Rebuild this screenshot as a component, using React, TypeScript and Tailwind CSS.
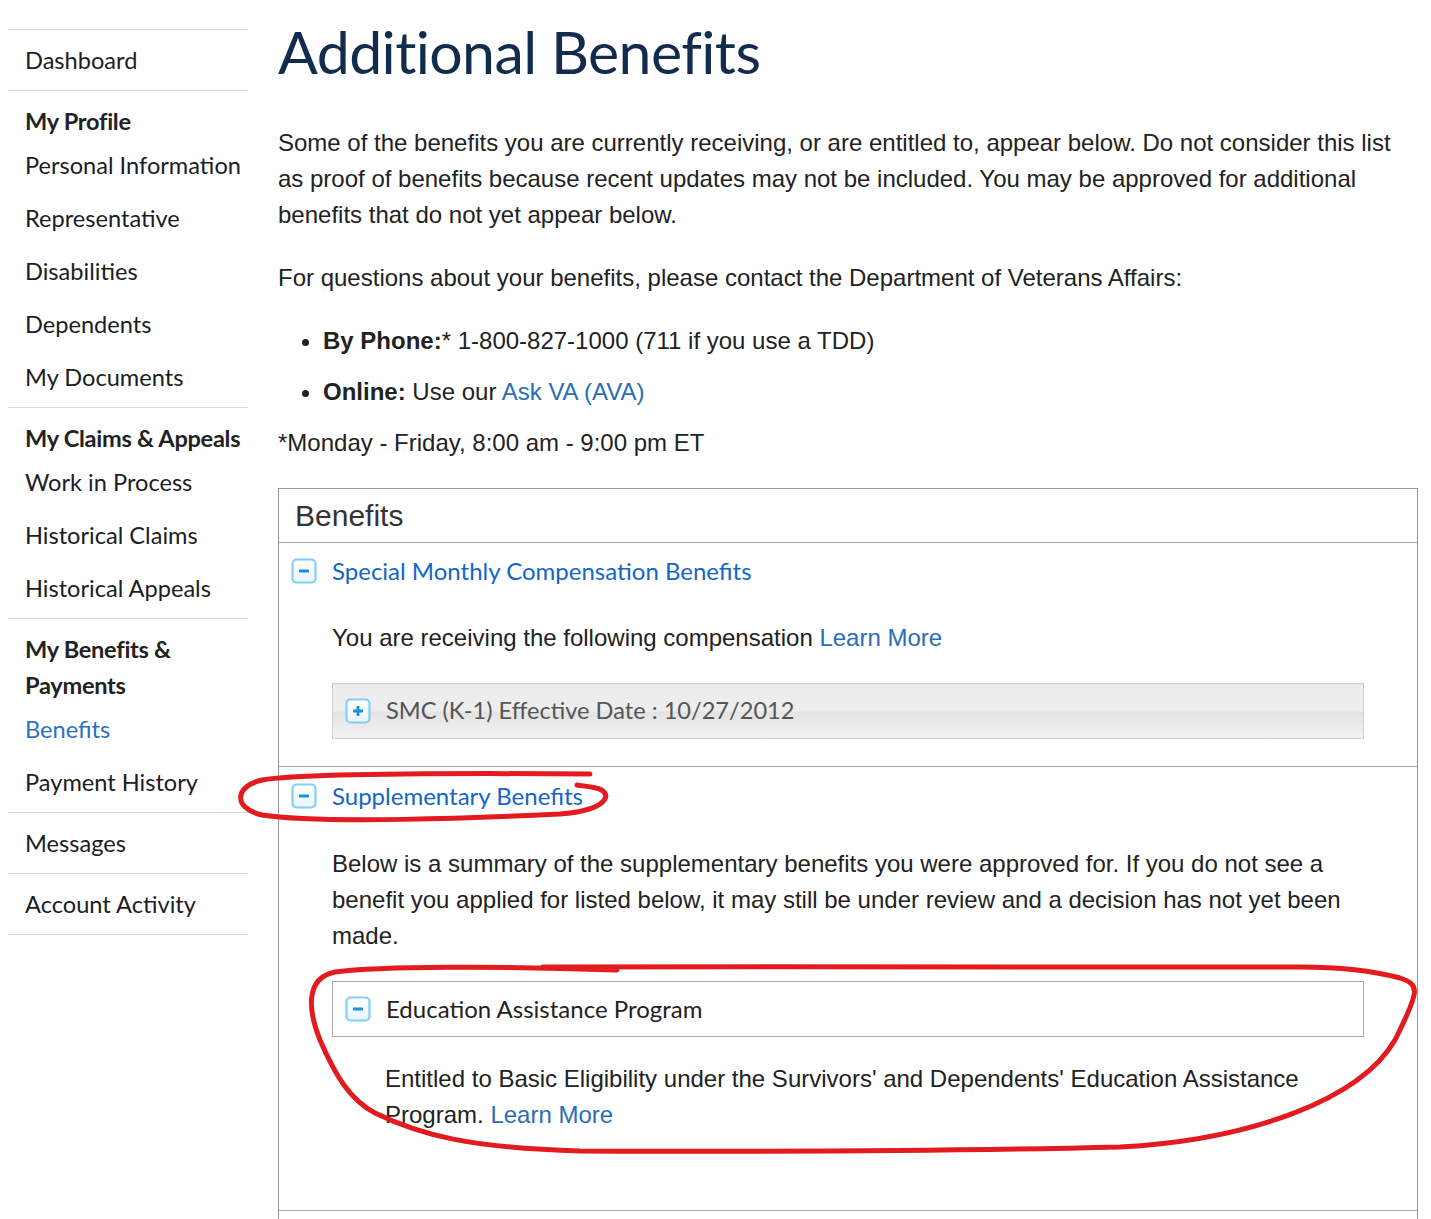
import type { ReactNode } from 'react';

const lato = "font-['Lato','Liberation_Sans',sans-serif]";
const arial = "font-['Liberation_Sans',Arial,sans-serif]";

type NavGroup = {
  heading?: string;
  items: { label: string; active?: boolean }[];
};

const navGroups: NavGroup[] = [
  { items: [{ label: 'Dashboard' }] },
  {
    heading: 'My Profile',
    items: [
      { label: 'Personal Information' },
      { label: 'Representative' },
      { label: 'Disabilities' },
      { label: 'Dependents' },
      { label: 'My Documents' },
    ],
  },
  {
    heading: 'My Claims & Appeals',
    items: [{ label: 'Work in Process' }, { label: 'Historical Claims' }, { label: 'Historical Appeals' }],
  },
  {
    heading: 'My Benefits & Payments',
    items: [{ label: 'Benefits', active: true }, { label: 'Payment History' }],
  },
  { items: [{ label: 'Messages' }] },
  { items: [{ label: 'Account Activity' }] },
];

function ToggleIcon({ open }: { open: boolean }) {
  return (
    <svg width="26" height="26" viewBox="0 0 26 26" className="shrink-0">
      <defs>
        <linearGradient id="tgl" x1="0" y1="0" x2="0" y2="1">
          <stop offset="0" stopColor="#ffffff" />
          <stop offset="1" stopColor="#e6f5fd" />
        </linearGradient>
      </defs>
      <rect x="1.5" y="1.5" width="23" height="23" rx="4" fill="url(#tgl)" stroke="#86cdf1" strokeWidth="2.2" />
      <rect x="8" y="11.6" width="10" height="2.8" rx="0.6" fill="#1f8fdc" />
      {!open && <rect x="11.6" y="8" width="2.8" height="10" rx="0.6" fill="#1f8fdc" />}
    </svg>
  );
}

function Sidebar() {
  return (
    <nav className={`${lato} mt-[29px] w-[240px] shrink-0 border-t border-[#d6d6d6] text-[23.6px] text-[#1c1c24]`}>
      {navGroups.map((group, i) =>
        group.heading ? (
          <div key={i} className="border-b border-[#d6d6d6] pt-[12px] pb-[3px] pl-[17px]">
            <div className="font-bold leading-[36px] tracking-[-0.3px] text-[#222]">{group.heading}</div>
            {group.items.map((item) => (
              <div
                key={item.label}
                className={`flex h-[53px] items-center ${item.active ? 'text-[#2a72c6]' : ''}`}
              >
                {item.label}
              </div>
            ))}
          </div>
        ) : (
          <div key={i} className="flex h-[61px] items-center border-b border-[#d6d6d6] pt-[2px] pl-[17px]">
            {group.items[0].label}
          </div>
        ),
      )}
    </nav>
  );
}

function Link({ children }: { children: ReactNode }) {
  return <a className="cursor-pointer text-[#2b6db5]">{children}</a>;
}

function SectionHeader({ title }: { title: string }) {
  return (
    <div className="flex items-center gap-[15px] pl-[12px]">
      <ToggleIcon open />
      <span className={`${lato} text-[24px] leading-[26px] text-[#1466c6]`}>{title}</span>
    </div>
  );
}

function BenefitsPanel() {
  return (
    <div className="border border-[#999] pb-[40px]">
      <div className={`${arial} flex h-[54px] items-center border-b border-[#aaa] pl-[16px] text-[30px] text-[#333]`}>
        Benefits
      </div>

      {/* Special Monthly Compensation */}
      <section className="border-b border-[#aaa] pt-[15px] pb-[27px]">
        <SectionHeader title="Special Monthly Compensation Benefits" />
        <div className="px-[53px]">
          <p className="mt-[36px] leading-[36px]">
            You are receiving the following compensation <Link>Learn More</Link>
          </p>
          <div className="mt-[27px] flex h-[56px] items-center gap-[15px] border border-[#cfcfcf] bg-[linear-gradient(#ededed_0%,#ededed_50%,#e3e3e3_52%,#f3f3f3_100%)] pl-[12px]">
            <ToggleIcon open={false} />
            <span className={`${lato} text-[23.6px] text-[#555]`}>SMC (K-1) Effective Date : 10/27/2012</span>
          </div>
        </div>
      </section>

      {/* Supplementary */}
      <section className="border-b border-[#aaa] pt-[16px] pb-[77px]">
        <SectionHeader title="Supplementary Benefits" />
        <div className="px-[53px]">
          <p className="mt-[37px] leading-[36px]">
            Below is a summary of the supplementary benefits you were approved for. If you do not see a benefit you
            applied for listed below, it may still be under review and a decision has not yet been made.
          </p>
          <div className="mt-[27px] flex h-[56px] items-center gap-[15px] border border-[#aaa] bg-white pl-[12px]">
            <ToggleIcon open />
            <span className={`${lato} text-[24px] text-[#222]`}>Education Assistance Program</span>
          </div>
          <p className="mt-[24px] pl-[53px] pr-[53px] leading-[36px]">
            Entitled to Basic Eligibility under the Survivors' and Dependents' Education Assistance Program.{' '}
            <Link>Learn More</Link>
          </p>
        </div>
      </section>
    </div>
  );
}

function Markup() {
  // hand-drawn highlight strokes on top of the page
  return (
    <svg
      className="pointer-events-none absolute left-0 top-0"
      width="1431"
      height="1219"
      viewBox="0 0 1431 1219"
      fill="none"
      stroke="#e31b1f"
      strokeWidth="5"
      strokeLinecap="round"
      strokeLinejoin="round"
    >
      <path d="M590 774 C450 773 300 774 262 780 C235 786 232 808 262 815 C320 824 480 818 560 814 C610 810 614 792 596 788 C588 786 582 786 577 785" />
      <path d="M617 970 C500 966 380 966 335 972 C305 978 308 1010 320 1040 C335 1075 350 1100 375 1113 C420 1135 470 1148 580 1151 C800 1152 1000 1150 1120 1147 C1250 1140 1360 1100 1395 1040 C1420 990 1420 985 1400 978 C1370 970 1340 967 1300 967 C1100 966 800 967 543 967" />
    </svg>
  );
}

export default function App() {
  return (
    <div className="relative h-[1219px] overflow-hidden bg-white">
      <div className="flex items-start pl-[8px]">
        <Sidebar />
        <main className={`${arial} ml-[30px] w-[1140px] pt-[16px] text-[24px] text-[#222]`}>
          <h1 className={`${lato} mb-[37px] text-[59px] leading-[72px] tracking-[-0.6px] text-[#132b4c]`}>
            Additional Benefits
          </h1>
          <p className="leading-[36px]">
            Some of the benefits you are currently receiving, or are entitled to, appear below. Do not consider this
            list as proof of benefits because recent updates may not be included. You may be approved for additional
            benefits that do not yet appear below.
          </p>
          <p className="mt-[27px] leading-[36px]">
            For questions about your benefits, please contact the Department of Veterans Affairs:
          </p>
          <ul className="mt-[27px] list-disc pl-[45px] leading-[36px]">
            <li className="mb-[15px]">
              <b>By Phone:</b>* 1-800-827-1000 (711 if you use a TDD)
            </li>
            <li className="mb-[15px]">
              <b>Online:</b> Use our <Link>Ask VA (AVA)</Link>
            </li>
          </ul>
          <p className="mb-[27px] leading-[36px]">*Monday - Friday, 8:00 am - 9:00 pm ET</p>
          <BenefitsPanel />
        </main>
      </div>
      <Markup />
    </div>
  );
}
